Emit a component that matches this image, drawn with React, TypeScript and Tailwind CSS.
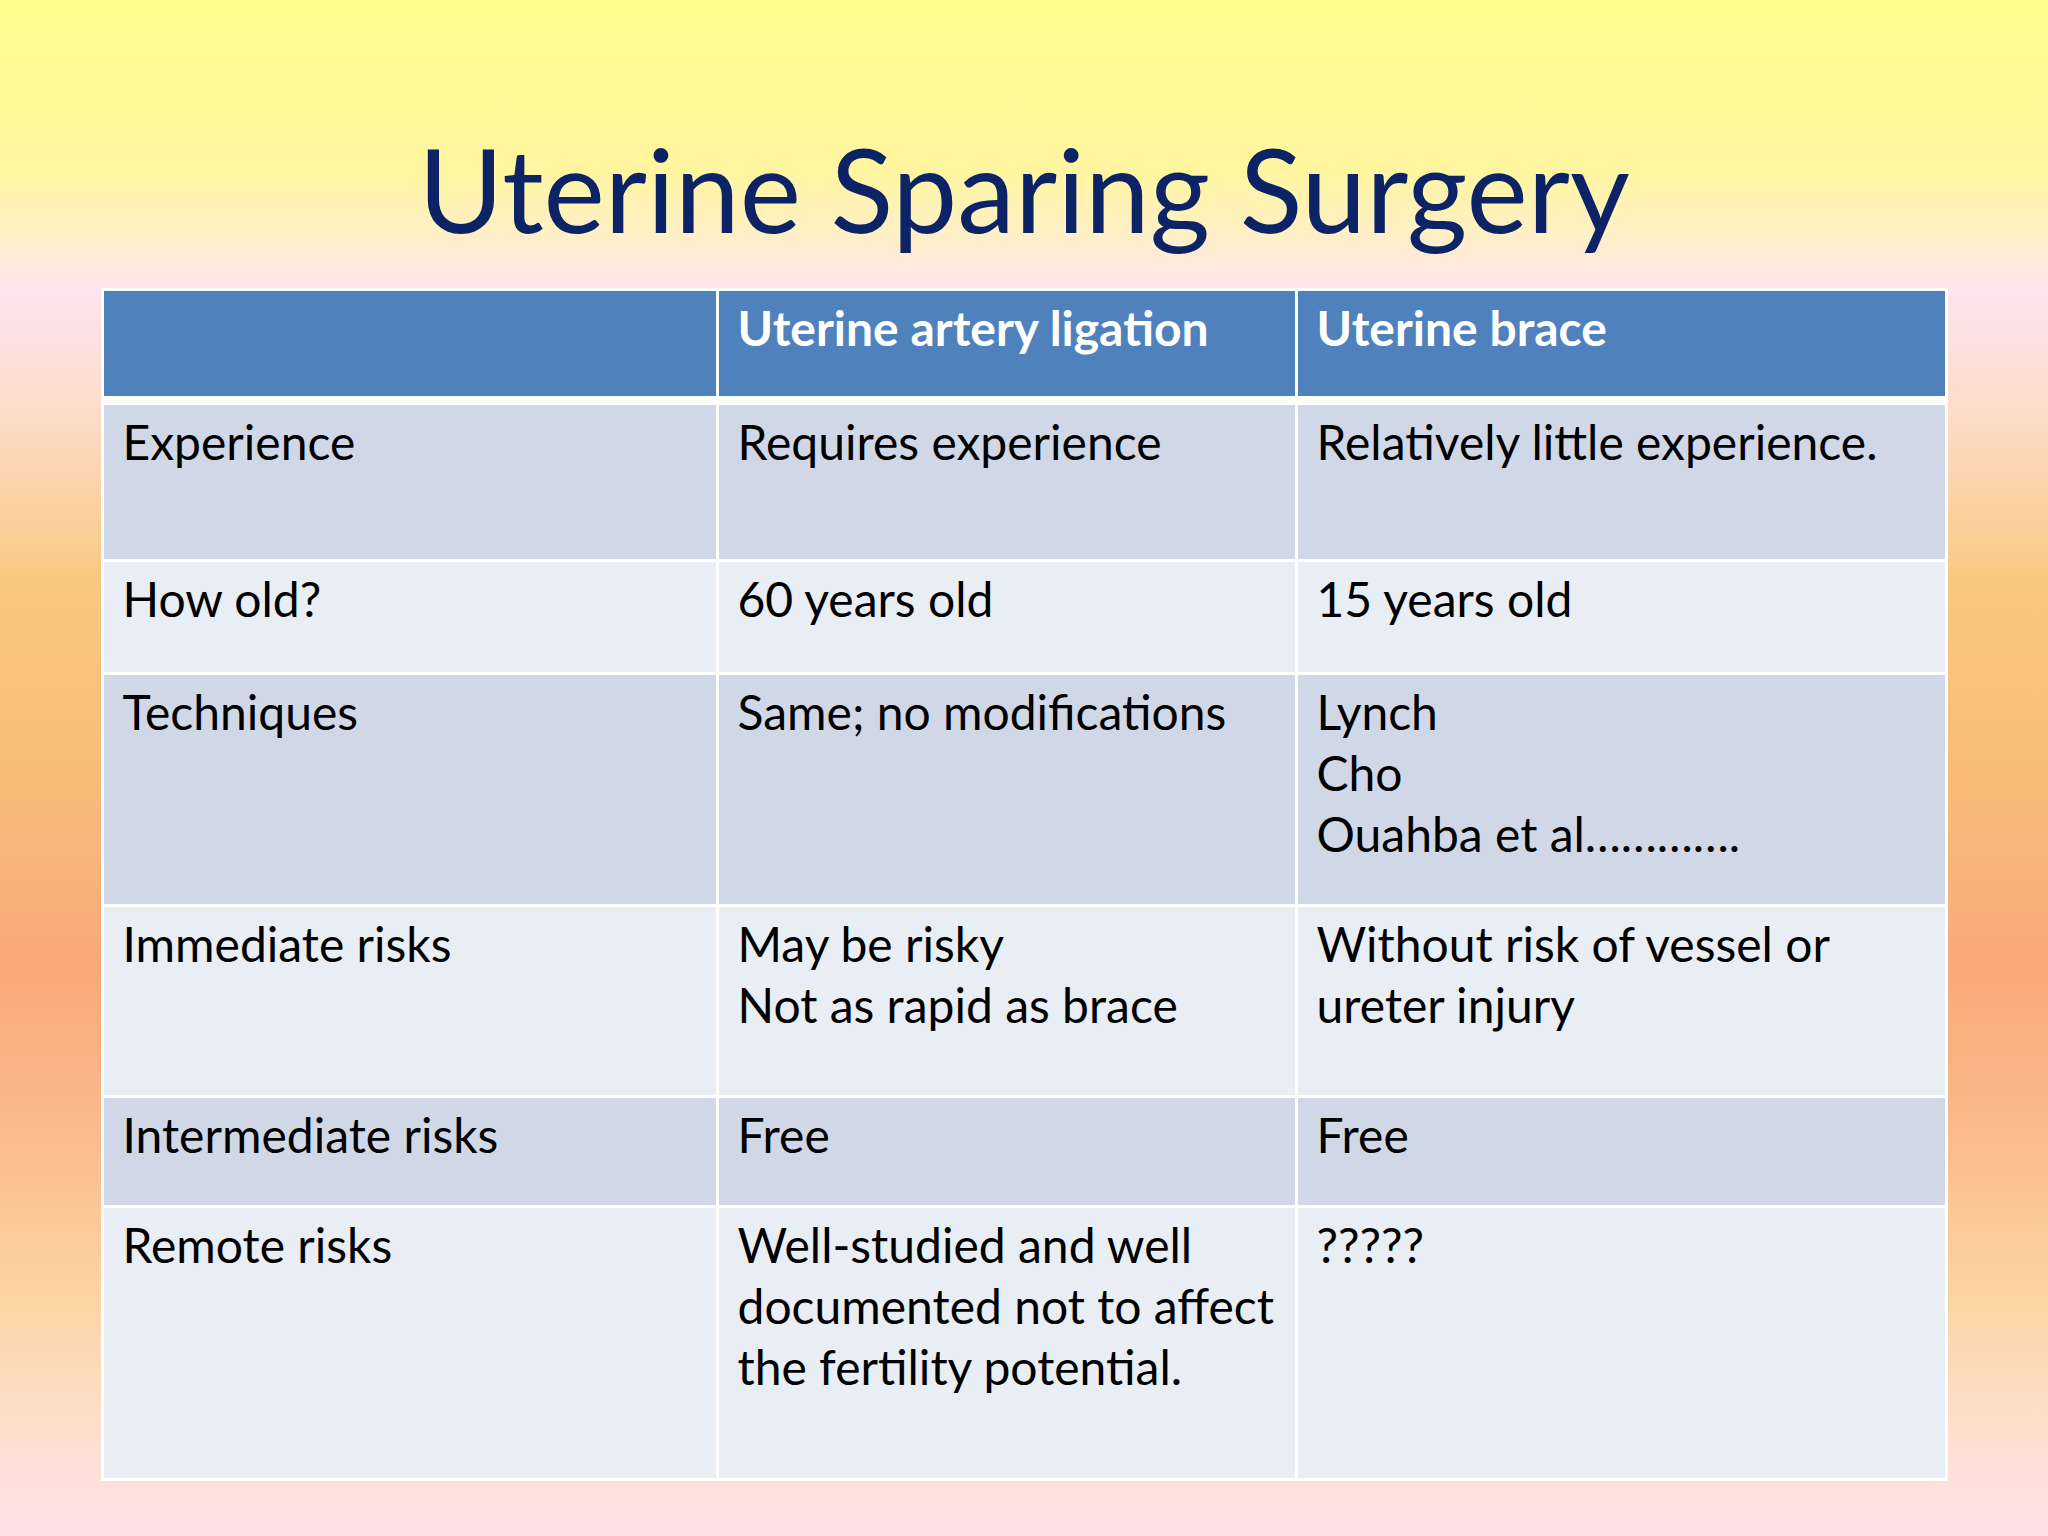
const rows = [
  {
    label: 'Experience',
    ligation: ['Requires experience'],
    brace: ['Relatively little experience.'],
    h: 'h-[154px]',
    bg: 'bg-[#d0d8e8]',
  },
  {
    label: 'How old?',
    ligation: ['60 years old'],
    brace: ['15 years old'],
    h: 'h-[110px]',
    bg: 'bg-[#e9edf4]',
  },
  {
    label: 'Techniques',
    ligation: ['Same; no modifications'],
    brace: ['Lynch', 'Cho', 'Ouahba et al\u2026\u2026\u2026\u2026.'],
    h: 'h-[229px]',
    bg: 'bg-[#d0d8e8]',
  },
  {
    label: 'Immediate risks',
    ligation: ['May be risky', 'Not as rapid as brace'],
    brace: ['Without risk of vessel or ureter injury'],
    h: 'h-[188px]',
    bg: 'bg-[#e9edf4]',
  },
  {
    label: 'Intermediate risks',
    ligation: ['Free'],
    brace: ['Free'],
    h: 'h-[107px]',
    bg: 'bg-[#d0d8e8]',
  },
  {
    label: 'Remote risks',
    ligation: ['Well-studied and well documented not to affect the fertility potential.'],
    brace: ['?????'],
    h: 'h-[270px]',
    bg: 'bg-[#e9edf4]',
  },
]

function Cell({ lines, className }: { lines: string[]; className: string }) {
  return (
    <div className={`pl-[19px] pr-[12px] pt-[6px] text-[48px] leading-[61px] text-black ${className}`}>
      {lines.map((l) => (
        <div key={l}>{l}</div>
      ))}
    </div>
  )
}

export default function App() {
  return (
    <div className="flex h-[1536px] w-[2048px] flex-col items-center bg-[linear-gradient(to_bottom,#ffff8c_0%,#fff6a0_11%,#fff0c4_15%,#fde4ee_19%,#fcdcc8_27%,#f9c87f_38%,#f8bc7a_50%,#f9a978_63%,#fbb98b_73%,#fbd6a4_85%,#fde0d8_95%,#fde2e4_100%)] font-[Lato,sans-serif]">
      {/* Title */}
      <h1 className="pt-[131px] text-[116px] leading-[116px] text-[#0c2466]">
        Uterine Sparing Surgery
      </h1>

      {/* Table */}
      <div className="mt-[41px] flex w-[1847px] flex-col gap-[3px] bg-white p-[3px]">
        <div className="mb-[6px] grid h-[105px] grid-cols-[612px_576px_647px] gap-[3px]">
          <div className="bg-[#4f81bd]" />
          <Cell lines={['Uterine artery ligation']} className="bg-[#4f81bd] font-bold text-white" />
          <Cell lines={['Uterine brace']} className="bg-[#4f81bd] font-bold text-white" />
        </div>
        {rows.map((r) => (
          <div key={r.label} className={`grid grid-cols-[612px_576px_647px] gap-[3px] ${r.h}`}>
            <Cell lines={[r.label]} className={r.bg} />
            <Cell lines={r.ligation} className={r.bg} />
            <Cell lines={r.brace} className={r.bg} />
          </div>
        ))}
      </div>
    </div>
  )
}
